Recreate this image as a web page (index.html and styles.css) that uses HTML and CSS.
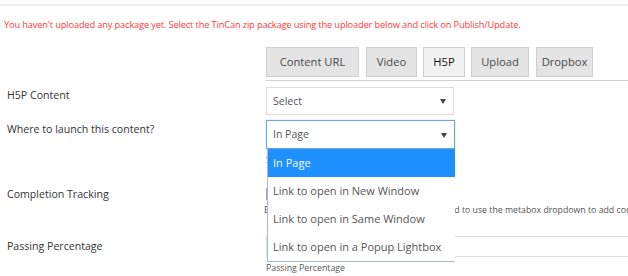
FILE: index.html
```html
<!DOCTYPE html>
<html>
<head>
<meta charset="utf-8">
<link rel="stylesheet" href="styles.css">
</head>
<body>
<div class="topline"></div>
<p class="notice">You haven't uploaded any package yet. Select the TinCan zip package using the uploader below and click on Publish/Update.</p>
<div class="tabs">
  <span class="tab tab-url">Content URL</span>
  <span class="tab tab-video">Video</span>
  <span class="tab tab-h5p active">H5P</span>
  <span class="tab tab-upload">Upload</span>
  <span class="tab tab-dropbox">Dropbox</span>
</div>
<div class="form">
  <div class="row row-first">
    <div class="label">H5P Content</div>
    <div class="field">
      <div class="select">Select<span class="arrow"></span></div>
    </div>
  </div>
  <div class="row row-tight">
    <div class="label label-tall">Where to launch this content?</div>
    <div class="field">
      <div class="select select-focus">In Page<span class="arrow"></span></div>
      <p class="desc">Select where the content should be launched.</p>
      <ul class="dropdown">
        <li class="option selected">In Page</li>
        <li class="option">Link to open in New Window</li>
        <li class="option">Link to open in Same Window</li>
        <li class="option">Link to open in a Popup Lightbox</li>
      </ul>
    </div>
  </div>
  <div class="row">
    <div class="label">Completion Tracking</div>
    <div class="field">
      <span class="checkbox"></span>
      <p class="desc desc-indent">Enable to track completion. Otherwise you need to use the metabox dropdown to add completion tracking.</p>
    </div>
  </div>
  <div class="row row-input">
    <div class="label label-input">Passing Percentage</div>
    <div class="field">
      <div class="input"></div>
      <p class="desc desc-after-input">Passing Percentage</p>
    </div>
  </div>
</div>
</body>
</html>
```
FILE: styles.css
```css
html, body {
  margin: 0;
  padding: 0;
  background: #fff;
  overflow: hidden;
}
body {
  width: 628px;
  height: 276px;
  font-family: "Open Sans", "Noto Sans", sans-serif;
  color: #32373c;
}
.topline {
  margin-top: 4px;
  border-top: 2px solid #ececec;
}
.notice {
  margin: 12px 0 0 0;
  padding-left: 4px;
  font-size: 9.3px;
  letter-spacing: -0.16px;
  line-height: 14px;
  color: #ff3b3b;
  white-space: nowrap;
}
.tabs {
  display: flex;
  margin: 15px 0 0 265px;
  padding: 0 0 3px 1px;
  border-bottom: 1px solid #d2d2d2;
}
.tab {
  box-sizing: border-box;
  height: 30px;
  line-height: 28px;
  text-align: center;
  border: 1px solid #d0d0d0;
  background: #e4e4e4;
  color: #4a4a4a;
  font-size: 11.2px;
  font-weight: 500;
  white-space: nowrap;
}
.tab-url { width: 93px; }
.tab-video { width: 51px; margin-left: 7px; }
.tab-h5p { width: 42px; margin-left: 6px; }
.tab-upload { width: 58px; margin-left: 6px; }
.tab-dropbox { width: 57px; margin-left: 7px; }
.tab.active {
  background: #f1f1f1;
  color: #111;
}
.form {
  display: flex;
  flex-direction: column;
}
.row {
  display: grid;
  grid-template-columns: 266px 1fr;
  margin-top: 19px;
}
.row-first {
  margin-top: 6px;
}
.row-tight {
  margin-top: 5px;
}
.label {
  padding-left: 7px;
  font-size: 10.6px;
  line-height: 16px;
  color: #333;
  white-space: nowrap;
}
.label-tall {
  line-height: 18px;
}
.label-input {
  line-height: 21px;
}
.field {
  position: relative;
  min-width: 0;
}
.select {
  position: relative;
  box-sizing: border-box;
  width: 188px;
  height: 28px;
  line-height: 26px;
  padding-left: 6px;
  border: 1px solid #dcdcdc;
  font-size: 10.5px;
  color: #555;
  background: #fff;
}
.select-focus {
  height: 29px;
  line-height: 27px;
  width: 189px;
  border-color: #6aa5dc;
  box-shadow: 0 0 1px rgba(30, 140, 190, 0.5);
}
.arrow {
  position: absolute;
  right: 7px;
  top: 50%;
  margin-top: -2px;
  width: 0;
  height: 0;
  border-left: 3px solid transparent;
  border-right: 3px solid transparent;
  border-top: 5px solid #444;
}
.desc {
  margin: 4px 0 0 0;
  font-size: 8.75px;
  line-height: 14px;
  color: #555;
  white-space: nowrap;
}
.desc-indent {
  text-indent: -2px;
}
.desc-after-input {
  margin-top: 4px;
}
.checkbox {
  display: block;
  margin-top: 2px;
  width: 12px;
  height: 12px;
  box-sizing: border-box;
  border: 1px solid #aaa;
  background: #fff;
}
.checkbox + .desc {
  margin-top: 3px;
}
.input {
  box-sizing: border-box;
  width: 520px;
  height: 21px;
  border: 1px solid #dcdcdc;
  background: #fff;
}
.dropdown {
  position: absolute;
  left: 1px;
  top: 29px;
  width: 188px;
  margin: 0;
  padding: 0;
  list-style: none;
  background: #fff;
  border-left: 1px solid #a9b8d2;
  border-bottom: 1px solid #a9b8d2;
  box-sizing: border-box;
  z-index: 2;
}
.option {
  height: 28px;
  line-height: 28px;
  padding-left: 5px;
  font-size: 11px;
  color: #555;
  white-space: nowrap;
}
.option.selected {
  background: #1e90ff;
  color: #fff;
}
```
